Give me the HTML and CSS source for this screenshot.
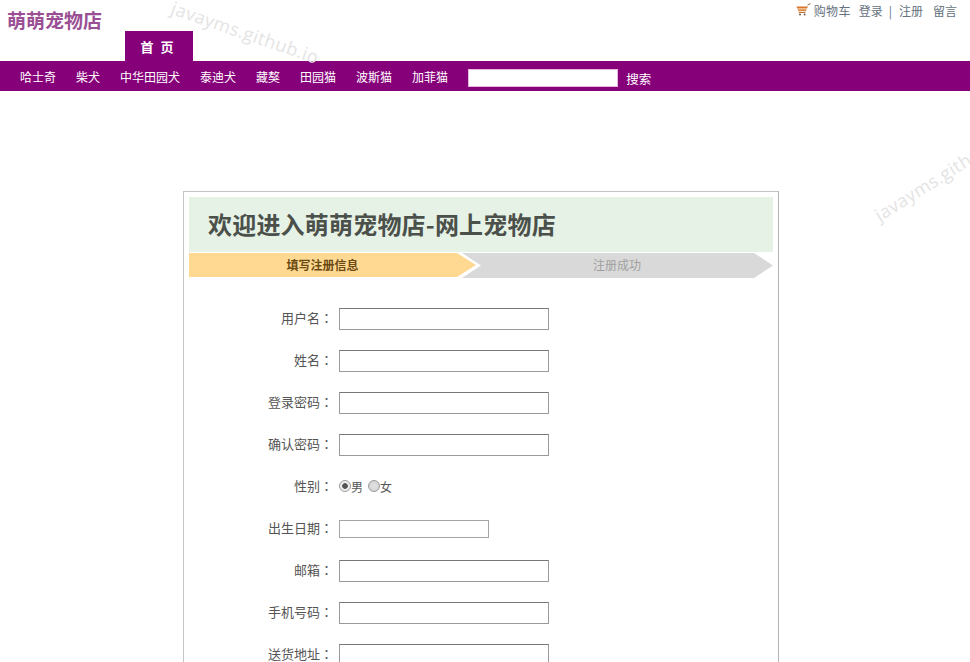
FILE: index.html
```html
<!DOCTYPE html>
<html lang="zh-CN">
<head>
<meta charset="utf-8">
<title>萌萌宠物店</title>
<link rel="stylesheet" href="styles.css">
</head>
<body>
<div class="page">
  <header class="header">
    <div class="brand">萌萌宠物店</div>
    <a class="home-tab" href="#">首 页</a>
    <nav class="top-links">
      <svg class="cart" width="15" height="13" viewBox="0 0 15 13" aria-hidden="true">
        <path d="M14.5 .6 11.6 2" fill="none" stroke="#8a6a4a" stroke-width="1"/>
        <path d="M.5 3.5H12L11 5.5H1.2Z" fill="#d9762b"/>
        <path d="M1.6 6.3H10.6L9.8 8.3H2.4Z" fill="#e08a3c"/>
        <path d="M2.8 9.1H9.4V10H2.8Z" fill="#b5622a"/>
        <circle cx="4" cy="11.6" r="1" fill="#7a5a3a"/>
        <circle cx="8.6" cy="11.6" r="1" fill="#7a5a3a"/>
      </svg>
      <a class="cart-link" href="#">购物车</a>
      <a href="#">登录</a>
      <span class="sep">|</span>
      <a href="#">注册</a>
      <a class="msg" href="#">留言</a>
    </nav>
  </header>
  <div class="nav-bar">
    <a href="#">哈士奇</a>
    <a href="#">柴犬</a>
    <a href="#">中华田园犬</a>
    <a href="#">泰迪犬</a>
    <a href="#">藏獒</a>
    <a href="#">田园猫</a>
    <a href="#">波斯猫</a>
    <a href="#">加菲猫</a>
    <input class="search-input" type="text" aria-label="搜索">
    <a class="search-link" href="#">搜索</a>
  </div>
  <main class="card">
    <h1 class="card-title">欢迎进入萌萌宠物店-网上宠物店</h1>
    <div class="steps">
      <div class="step-edge">
        <div class="step-active">填写注册信息</div>
      </div>
      <div class="step-next">注册成功</div>
    </div>
    <form class="form">
      <div class="row"><label class="label">用户名<span class="colon" lang="zh-TW">：</span></label><input class="field" type="text"></div>
      <div class="row"><label class="label">姓名<span class="colon" lang="zh-TW">：</span></label><input class="field" type="text"></div>
      <div class="row"><label class="label">登录密码<span class="colon" lang="zh-TW">：</span></label><input class="field" type="text"></div>
      <div class="row"><label class="label">确认密码<span class="colon" lang="zh-TW">：</span></label><input class="field" type="text"></div>
      <div class="row">
        <label class="label">性别<span class="colon" lang="zh-TW">：</span></label>
        <div class="radios">
          <input class="radio" type="radio" name="sex" checked><span class="radio-text">男</span>
          <input class="radio" type="radio" name="sex"><span class="radio-text">女</span>
        </div>
      </div>
      <div class="row"><label class="label">出生日期<span class="colon" lang="zh-TW">：</span></label><input class="field field-date" type="text"></div>
      <div class="row"><label class="label">邮箱<span class="colon" lang="zh-TW">：</span></label><input class="field" type="text"></div>
      <div class="row"><label class="label">手机号码<span class="colon" lang="zh-TW">：</span></label><input class="field" type="text"></div>
      <div class="row"><label class="label">送货地址<span class="colon" lang="zh-TW">：</span></label><input class="field" type="text"></div>
    </form>
  </main>
  <div class="watermark wm-one">javayms.github.io</div>
  <div class="watermark wm-two">javayms.github.io</div>
</div>
</body>
</html>
```
FILE: styles.css
```css
html, body {
  margin: 0;
  padding: 0;
  background: #fff;
}
.page {
  position: relative;
  width: 970px;
  height: 662px;
  overflow: hidden;
  font-family: "Noto Sans CJK SC", "Liberation Sans", sans-serif;
  font-size: 12px;
  color: #555;
}
a {
  text-decoration: none;
  color: inherit;
}
.header {
  display: flex;
  height: 61px;
}
.brand {
  width: 125px;
  box-sizing: border-box;
  padding: 6px 0 0 7px;
  font-size: 19px;
  line-height: 28px;
  font-weight: 700;
  color: #9a4f94;
}
.home-tab {
  align-self: flex-end;
  box-sizing: border-box;
  width: 68px;
  height: 30px;
  padding-right: 4px;
  line-height: 32px;
  text-align: center;
  font-size: 13px;
  word-spacing: 4px;
  font-weight: 700;
  color: #fff;
  background: #86007a;
}
.top-links {
  display: flex;
  align-items: center;
  align-self: flex-start;
  height: 20px;
  margin-left: auto;
  padding-right: 13px;
  color: #667280;
}
.cart {
  margin-right: 3px;
  margin-top: -2px;
}
.cart-link {
  margin-right: 8px;
  letter-spacing: 0.3px;
}
.sep {
  margin: 0 7px 0 6px;
}
.msg {
  margin-left: 10px;
}
.nav-bar {
  display: flex;
  align-items: center;
  gap: 20px;
  height: 30px;
  padding-left: 20px;
  background: #86007a;
  color: #fff;
}
.search-input {
  box-sizing: border-box;
  width: 150px;
  height: 18px;
  margin: 4px 0 0;
  padding: 0;
  border: 1px solid #e6b8e0;
  background: #fff;
}
.search-link {
  margin: 4px 0 0 -12px;
  font-size: 12.5px;
}
.card {
  box-sizing: border-box;
  width: 596px;
  margin: 100px 0 0 183px;
  padding: 5px;
  border: 1px solid #c4c4c4;
  border-right-color: #b4b4b4;
}
.card-title {
  height: 55px;
  margin: 0 0 1px;
  padding-left: 19px;
  font-size: 24px;
  letter-spacing: 0.2px;
  line-height: 53px;
  font-weight: 700;
  color: #4b504a;
  background: #e6f2e6;
}
.steps {
  display: flex;
  width: 584px;
  height: 25px;
  line-height: 24px;
  background: #d9d9d9;
  clip-path: polygon(0 0, 565px 0, 100% 50%, 565px 100%, 0 100%);
}
.step-edge {
  width: 292px;
  background: #fff;
  clip-path: polygon(0 0, 273px 0, 100% 50%, 273px 100%, 0 100%);
}
.step-active {
  width: 287px;
  padding-right: 20px;
  box-sizing: border-box;
  text-align: center;
  font-weight: 700;
  color: #6b4a12;
  background: #ffd992;
  clip-path: polygon(0 0, 268px 0, 100% 50%, 268px 100%, 0 100%);
}
.step-next {
  flex: 1;
  padding-right: 20px;
  text-align: center;
  color: #a0a0a0;
}
.form {
  display: flex;
  flex-direction: column;
  gap: 20px;
  padding-top: 30px;
}
.row {
  display: flex;
  align-items: center;
  gap: 6px;
  height: 22px;
}
.label {
  width: 144px;
  margin-top: -4px;
  text-align: right;
  font-size: 13px;
  color: #555;
}
.colon {
  font-family: "Noto Sans CJK TC", "Liberation Sans", sans-serif;
}
.field {
  box-sizing: border-box;
  width: 210px;
  height: 22px;
  margin: 0;
  padding: 0;
  border: 1px solid #9a9a9a;
  border-top-color: #777;
  background: #fff;
}
.field-date {
  width: 150px;
  height: 18px;
  border-color: #a5a5a5;
}
.radios {
  display: flex;
  align-items: center;
}
.radio {
  appearance: none;
  box-sizing: border-box;
  width: 12px;
  height: 12px;
  margin: -3px 0 0;
  border: 1px solid #9a9a9a;
  border-radius: 50%;
  background: radial-gradient(circle, #e2e2e2 0, #d0d0d0 100%);
}
.radio:checked {
  background: radial-gradient(circle, #555 0, #555 35%, #eee 45%, #eee 100%);
}
.radio-text {
  width: 17px;
  font-size: 12px;
  line-height: 14px;
}
.watermark {
  position: absolute;
  font-family: "Open Sans", "Liberation Sans", sans-serif;
  font-size: 18px;
  letter-spacing: 0.5px;
  line-height: 20px;
  white-space: nowrap;
  color: #e4e4e4;
  transform-origin: 0 50%;
}
.wm-one {
  left: 172px;
  top: -3px;
  transform: rotate(19deg);
}
.wm-two {
  left: 876px;
  top: 206px;
  transform: rotate(-32deg);
}
```
